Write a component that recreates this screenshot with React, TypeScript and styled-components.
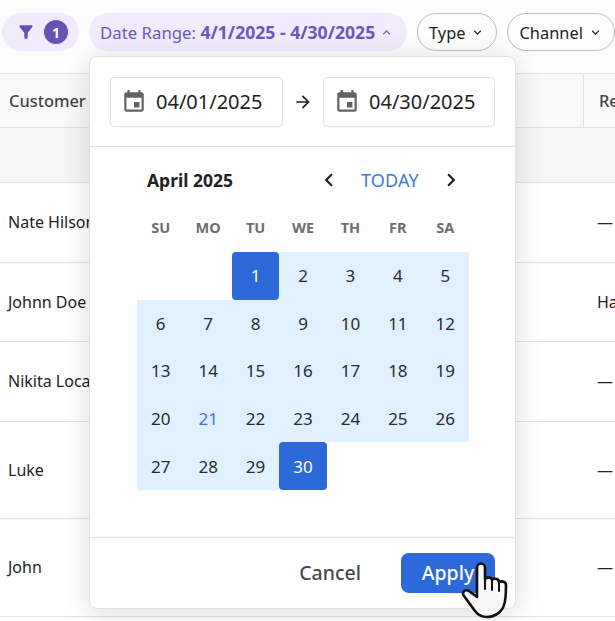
import { FC } from "react";
import styled, { createGlobalStyle } from "styled-components";
import {
  MdArrowForward,
  MdChevronLeft,
  MdChevronRight,
  MdEvent,
  MdFilterAlt,
  MdKeyboardArrowDown,
  MdKeyboardArrowUp,
} from "react-icons/md";

const WEEK_DAYS = ["SU", "MO", "TU", "WE", "TH", "FR", "SA"];
const DAYS_IN_MONTH = 30;
const FIRST_WEEKDAY = 2;
const TODAY = 21;

const ROWS = [
  { name: "Nate Hilson", note: "—", height: 80 },
  { name: "Johnn Doe", note: "Ha", height: 79 },
  { name: "Nikita Locat", note: "—", height: 80 },
  { name: "Luke", note: "—", height: 97 },
  { name: "John", note: "—", height: 98 },
];

export default function App() {
  return (
    <Page>
      <GlobalStyle />
      <Toolbar>
        <FilterChip>
          <MdFilterAlt size={20} color="#5f51b5" />
          <Badge>1</Badge>
        </FilterChip>
        <DateChip>
          Date Range:&nbsp;<strong>4/1/2025 - 4/30/2025</strong>
          <MdKeyboardArrowUp size={15} />
        </DateChip>
        <OutlineChip>
          Type <MdKeyboardArrowDown size={15} />
        </OutlineChip>
        <OutlineChip>
          Channel <MdKeyboardArrowDown size={15} />
        </OutlineChip>
      </Toolbar>

      <Table>
        <HeaderRow>
          <HeaderCell>Customer</HeaderCell>
          <HeaderCellLast>Re</HeaderCellLast>
        </HeaderRow>
        <SearchRow />
        {ROWS.map((row) => (
          <Row key={row.name} height={row.height}>
            <NameCell>{row.name}</NameCell>
            <NoteCell>{row.note}</NoteCell>
          </Row>
        ))}
      </Table>

      <Popover>
        <Inputs>
          <DateInput value="04/01/2025" />
          <MdArrowForward size={20} color="#222" />
          <DateInput value="04/30/2025" />
        </Inputs>
        <Calendar />
        <Footer>
          <CancelButton>Cancel</CancelButton>
          <ApplyButton>Apply</ApplyButton>
        </Footer>
        <HandCursor />
      </Popover>
    </Page>
  );
}

const DateInput: FC<{ value: string }> = ({ value }) => (
  <InputBox>
    <MdEvent size={26} color="#616161" />
    <InputText>{value}</InputText>
  </InputBox>
);

const Calendar: FC = () => {
  const blanks = Array.from({ length: FIRST_WEEKDAY });
  const days = Array.from({ length: DAYS_IN_MONTH }, (_, i) => i + 1);

  return (
    <CalendarBody>
      <MonthBar>
        <MonthTitle>April 2025</MonthTitle>
        <MonthNav>
          <MdChevronLeft size={26} color="#222" />
          <TodayLink>TODAY</TodayLink>
          <MdChevronRight size={26} color="#222" />
        </MonthNav>
      </MonthBar>
      <WeekRow>
        {WEEK_DAYS.map((day) => (
          <WeekDay key={day}>{day}</WeekDay>
        ))}
      </WeekRow>
      <DaysGrid>
        {blanks.map((_, i) => (
          <span key={i} />
        ))}
        {days.map((day) => (
          <Day
            key={day}
            $selected={day === 1 || day === DAYS_IN_MONTH}
            $today={day === TODAY}
          >
            {day}
          </Day>
        ))}
      </DaysGrid>
    </CalendarBody>
  );
};

const HandCursor: FC = () => (
  <HandSvg viewBox="0 0 70 71" width="70" height="71">
    <path
      d="M27 18c0-6 8-6 8 0v11c1-2 7-2 7 1 1-2 7-2 7 2 2-1 7-1 7 3 0 8 0 15-2 20-2 7-9 12-17 12-5 0-9-2-12-6L14 46c-3-4 1-7 5-5l8 6z"
      fill="#f7f7f7"
      stroke="#111"
      strokeWidth="2.6"
      strokeLinejoin="round"
    />
    <path
      d="M35 29v10M42 30v10M49 32v9"
      fill="none"
      stroke="#111"
      strokeWidth="2"
      strokeLinecap="round"
    />
  </HandSvg>
);

const GlobalStyle = createGlobalStyle`
  body {
    margin: 0;
    background: #fff;
    font-family: "Noto Sans", "Open Sans", sans-serif;
    color: #222;
  }
`;

const Page = styled.div`
  position: relative;
  width: 615px;
  height: 621px;
  overflow: hidden;
  background: #fff;
`;

const Toolbar = styled.div`
  display: flex;
  align-items: center;
  column-gap: 10px;
  height: 73px;
  padding: 0 0 9px 2px;
  box-sizing: border-box;
  white-space: nowrap;
  background: #fdfdfd;
`;

const FilterChip = styled.div`
  display: flex;
  align-items: center;
  column-gap: 8px;
  width: 77px;
  height: 38px;
  padding-left: 14px;
  box-sizing: border-box;
  border-radius: 19px;
  background: #f0ebfd;
`;

const Badge = styled.span`
  display: flex;
  align-items: center;
  justify-content: center;
  width: 24px;
  height: 24px;
  border-radius: 50%;
  background: #6553b8;
  color: #fff;
  font-size: 14px;
  font-weight: 700;
`;

const DateChip = styled.div`
  display: flex;
  align-items: center;
  flex-shrink: 0;
  width: 318px;
  height: 38px;
  padding: 0 0 0 11px;
  box-sizing: border-box;
  border-radius: 19px;
  background: #f0ebfd;
  color: #6a5ab8;
  font-size: 16.8px;

  strong {
    font-size: 17.6px;
    font-weight: 700;
    margin-right: 4px;
  }
`;

const OutlineChip = styled.div`
  display: flex;
  align-items: center;
  column-gap: 5px;
  flex-shrink: 0;
  height: 38px;
  padding: 0 11px;
  box-sizing: border-box;
  border: 1px solid #bdbdbd;
  border-radius: 19px;
  font-size: 16.4px;
  color: #222;
`;

const Table = styled.div`
  display: flex;
  flex-direction: column;
`;

const HeaderRow = styled.div`
  display: flex;
  height: 55px;
  box-sizing: border-box;
  border-top: 1px solid #e2e2e2;
  border-bottom: 1px solid #e2e2e2;
  background: #f9f9f9;
`;

const HeaderCell = styled.div`
  display: flex;
  align-items: center;
  flex-shrink: 0;
  width: 584px;
  padding-left: 9px;
  box-sizing: border-box;
  border-right: 1px solid #e2e2e2;
  font-size: 16.4px;
  font-weight: 500;
  color: #444;
`;

const HeaderCellLast = styled(HeaderCell)`
  width: 31px;
  padding-left: 15px;
  border-right: none;
  overflow: hidden;
`;

const SearchRow = styled.div`
  height: 55px;
  box-sizing: border-box;
  border-bottom: 1px solid #e2e2e2;
  background: #f6f6f6;
`;

const Row = styled.div<{ height: number }>`
  display: flex;
  align-items: center;
  height: ${({ height }) => height}px;
  padding-bottom: 1px;
  box-sizing: border-box;
  border-bottom: 1px solid #e2e2e2;
  overflow: hidden;
  font-size: 16px;
  color: #222;
`;

const NameCell = styled.div`
  flex-shrink: 0;
  width: 597px;
  padding-left: 8px;
  box-sizing: border-box;
  white-space: nowrap;
`;

const NoteCell = styled.div`
  flex-shrink: 0;
  white-space: nowrap;
`;

const Popover = styled.div`
  position: absolute;
  top: 56px;
  left: 89px;
  display: flex;
  flex-direction: column;
  width: 427px;
  height: 553px;
  box-sizing: border-box;
  border: 1px solid #e2e2e2;
  border-radius: 8px;
  background: #fff;
  box-shadow: 0 4px 28px rgba(0, 0, 0, 0.14);
`;

const Inputs = styled.div`
  display: flex;
  align-items: center;
  justify-content: space-between;
  height: 90px;
  padding: 0 20px;
  box-sizing: border-box;
  border-bottom: 1px solid #e2e2e2;
`;

const InputBox = styled.div`
  display: flex;
  align-items: center;
  column-gap: 9px;
  width: 173px;
  height: 50px;
  padding-left: 10px;
  box-sizing: border-box;
  border: 1px solid #e2e2e2;
  border-radius: 4px;

  & + svg + & {
    width: 172px;
  }
`;

const InputText = styled.span`
  font-size: 20px;
  color: #222;
`;

const CalendarBody = styled.div`
  display: flex;
  flex-direction: column;
  height: 391px;
  padding: 0 46px 0 47px;
  box-sizing: border-box;
  border-bottom: 1px solid #e2e2e2;
`;

const MonthBar = styled.div`
  display: flex;
  align-items: center;
  justify-content: space-between;
  height: 66px;
  padding: 0 5px 0 10px;
`;

const MonthTitle = styled.div`
  font-size: 17.5px;
  font-weight: 700;
  color: #222;
`;

const MonthNav = styled.div`
  display: flex;
  align-items: center;
  column-gap: 19px;
`;

const TodayLink = styled.span`
  font-size: 18px;
  letter-spacing: 0.2px;
  color: #3f78de;
`;

const WeekRow = styled.div`
  display: grid;
  grid-template-columns: repeat(7, 1fr);
  height: 39px;
  padding-bottom: 11px;
  box-sizing: border-box;
`;

const WeekDay = styled.div`
  display: flex;
  align-items: center;
  justify-content: center;
  font-size: 14.5px;
  font-weight: 700;
  color: #6e6e6e;
`;

const DaysGrid = styled.div`
  display: grid;
  grid-template-columns: repeat(7, 1fr);
  grid-auto-rows: 47.6px;
`;

const Day = styled.div<{ $selected: boolean; $today: boolean }>`
  display: flex;
  align-items: center;
  justify-content: center;
  border-radius: ${({ $selected }) => ($selected ? "4px" : "0")};
  background: ${({ $selected }) => ($selected ? "#2d69d8" : "#e0f0fe")};
  color: ${({ $selected, $today }) =>
    $selected ? "#fff" : $today ? "#3f78de" : "#2b2b2b"};
  font-size: 17px;
`;

const Footer = styled.div`
  display: flex;
  flex: 1;
  align-items: center;
  justify-content: flex-end;
  column-gap: 40px;
  padding-right: 20px;
`;

const CancelButton = styled.span`
  margin-bottom: 2px;
  font-size: 19.5px;
  font-weight: 500;
  color: #4a4a4a;
`;

const ApplyButton = styled.div`
  display: flex;
  align-items: center;
  justify-content: center;
  width: 94px;
  height: 40px;
  padding-bottom: 2px;
  box-sizing: border-box;
  border-radius: 8px;
  background: #2d69d8;
  color: #fff;
  font-size: 19.5px;
  font-weight: 500;
`;

const HandSvg = styled.svg`
  position: absolute;
  top: 493px;
  left: 360px;
`;
